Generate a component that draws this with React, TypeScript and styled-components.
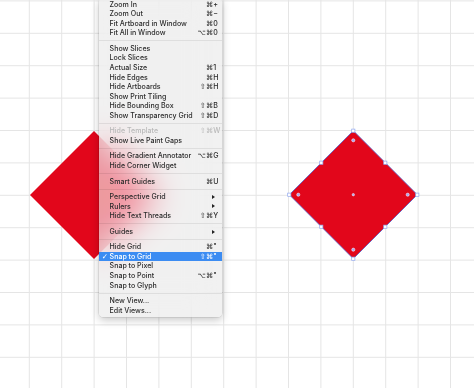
import React from "react";
import styled, { createGlobalStyle } from "styled-components";

const Global = createGlobalStyle`
  html, body { margin: 0; padding: 0; background: #fff; overflow: hidden; }
  #root { width: 474px; height: 388px; }
`;

const Canvas = styled.div`
  position: relative;
  width: 474px;
  height: 388px;
  background: #fff;
  overflow: hidden;
`;

const Art = styled.svg`
  position: absolute;
  left: 0;
  top: 0;
  width: 474px;
  height: 388px;
`;

const Menu = styled.div`
  position: absolute;
  left: 99px;
  top: -2.5px;
  width: 123px;
  padding: 2px 0 2px;
  box-sizing: border-box;
  display: flex;
  flex-direction: column;
  background: rgba(234, 234, 234, 0.66);
  backdrop-filter: blur(17px) saturate(1.9);
  -webkit-backdrop-filter: blur(17px) saturate(1.9);
  border-radius: 4px;
  box-shadow: 0 0 0 0.5px rgba(0, 0, 0, 0.14), 0 3px 8px rgba(0, 0, 0, 0.22);
  font-family: Inter, "Liberation Sans", "DejaVu Sans", sans-serif;
  font-size: 7.05px;
  font-weight: 500;
`;

const Row = styled.div<{ $active?: boolean; $disabled?: boolean }>`
  display: grid;
  grid-template-columns: 10.6px 1fr auto;
  align-items: center;
  height: 9.6px;
  line-height: 9.6px;
  padding-right: 4px;
  white-space: nowrap;
  color: ${(p) => (p.$disabled ? "#b9b9b9" : p.$active ? "#fff" : "#2b2b2b")};
  background: ${(p) => (p.$active ? "#3c8cf2" : "transparent")};
`;

const Check = styled.span`
  text-align: center;
  padding-left: 1px;
  font-family: "DejaVu Sans", sans-serif;
  font-size: 7.5px;
  font-weight: bold;
`;

const Label = styled.span``;

const Shortcut = styled.span`
  display: flex;
  align-items: center;
  justify-content: flex-end;
`;

const Mods = styled.span`
  font-family: "DejaVu Sans", sans-serif;
  font-size: 7.2px;
  letter-spacing: 0.1px;
`;

const Key = styled.span`
  display: inline-block;
  width: 4.8px;
  text-align: left;
  font-size: 7.05px;
`;

const Arrow = styled.span`
  width: 0;
  height: 0;
  margin-right: 3px;
  border-left: 3.8px solid #222;
  border-top: 2.3px solid transparent;
  border-bottom: 2.3px solid transparent;
`;

const Sep = styled.div`
  height: 5.9px;
  display: flex;
  align-items: center;
  &::after {
    content: "";
    flex: 1;
    height: 1px;
    background: rgba(0, 0, 0, 0.08);
  }
`;

type Item =
  | { sep: true }
  | {
      label: string;
      mods?: string;
      k?: string;
      sub?: boolean;
      checked?: boolean;
      active?: boolean;
      disabled?: boolean;
    };

const items: Item[] = [
  { label: "Zoom In", mods: "⌘", k: "+" },
  { label: "Zoom Out", mods: "⌘", k: "−" },
  { label: "Fit Artboard in Window", mods: "⌘", k: "0" },
  { label: "Fit All in Window", mods: "⌥⌘", k: "0" },
  { sep: true },
  { label: "Show Slices" },
  { label: "Lock Slices" },
  { label: "Actual Size", mods: "⌘", k: "1" },
  { label: "Hide Edges", mods: "⌘", k: "H" },
  { label: "Hide Artboards", mods: "⇧⌘", k: "H" },
  { label: "Show Print Tiling" },
  { label: "Hide Bounding Box", mods: "⇧⌘", k: "B" },
  { label: "Show Transparency Grid", mods: "⇧⌘", k: "D" },
  { sep: true },
  { label: "Hide Template", mods: "⇧⌘", k: "W", disabled: true },
  { label: "Show Live Paint Gaps" },
  { sep: true },
  { label: "Hide Gradient Annotator", mods: "⌥⌘", k: "G" },
  { label: "Hide Corner Widget" },
  { sep: true },
  { label: "Smart Guides", mods: "⌘", k: "U" },
  { sep: true },
  { label: "Perspective Grid", sub: true },
  { label: "Rulers", sub: true },
  { label: "Hide Text Threads", mods: "⇧⌘", k: "Y" },
  { sep: true },
  { label: "Guides", sub: true },
  { sep: true },
  { label: "Hide Grid", mods: "⌘", k: "\"" },
  { label: "Snap to Grid", mods: "⇧⌘", k: "\"", checked: true, active: true },
  { label: "Snap to Pixel" },
  { label: "Snap to Point", mods: "⌥⌘", k: "\"" },
  { label: "Snap to Glyph" },
  { sep: true },
  { label: "New View..." },
  { label: "Edit Views..." },
];

const G = 32.4;
const vLines = Array.from({ length: 16 }, (_, i) => -3.1 + G * i).filter((x) => x > 0 && x < 474);
const hLines = Array.from({ length: 14 }, (_, i) => 0.9 + G * i).filter((y) => y > 0 && y < 388);

const cx = 353.3;
const cy = 194.7;
const h = 64;

const Handle: React.FC<{ x: number; y: number }> = ({ x, y }) => (
  <rect x={x - 1.6} y={y - 1.6} width={3.2} height={3.2} fill="#fff" stroke="#8fa6f0" strokeWidth={0.7} />
);

const Anchor: React.FC<{ x: number; y: number; r?: number }> = ({ x, y, r = 1.6 }) => (
  <circle cx={x} cy={y} r={r} fill="#a9a4f2" stroke="#fff" strokeWidth={0.5} />
);

export default function App() {
  return (
    <>
      <Global />
      <Canvas>
        <Art viewBox="0 0 474 388">
          {vLines.map((x) => (
            <line key={"v" + x} x1={x} x2={x} y1={0} y2={388} stroke="#e5e5e5" strokeWidth={1} />
          ))}
          {hLines.map((y) => (
            <line key={"h" + y} x1={0} x2={474} y1={y} y2={y} stroke="#e5e5e5" strokeWidth={1} />
          ))}
          <polygon points="30,195 94,131 158,195 94,259" fill="#e2061b" />
          <polygon
            points={`${cx},${cy - h} ${cx + h},${cy} ${cx},${cy + h} ${cx - h},${cy}`}
            fill="#e2061b"
            stroke="#5660c8"
            strokeWidth={0.8}
          />
          <Handle x={cx} y={cy - h} />
          <Handle x={cx + h} y={cy} />
          <Handle x={cx} y={cy + h} />
          <Handle x={cx - h} y={cy} />
          <Handle x={cx - 32} y={cy - 32} />
          <Handle x={cx + 32} y={cy - 32} />
          <Handle x={cx - 32} y={cy + 32} />
          <Handle x={cx + 32} y={cy + 32} />
          <Anchor x={cx} y={cy - 54.4} />
          <Anchor x={cx} y={cy + 55} />
          <Anchor x={cx - 55} y={cy} />
          <Anchor x={cx + 54.4} y={cy} />
          <Anchor x={cx} y={cy} r={1.2} />
        </Art>
        <Menu>
          {items.map((it, i) =>
            "sep" in it ? (
              <Sep key={i} />
            ) : (
              <Row key={i} $active={it.active} $disabled={it.disabled}>
                <Check>{it.checked ? "✓" : ""}</Check>
                <Label>{it.label}</Label>
                <Shortcut>
                  {it.sub ? (
                    <Arrow />
                  ) : it.mods ? (
                    <>
                      <Mods>{it.mods}</Mods>
                      <Key>{it.k}</Key>
                    </>
                  ) : null}
                </Shortcut>
              </Row>
            )
          )}
        </Menu>
      </Canvas>
    </>
  );
}
